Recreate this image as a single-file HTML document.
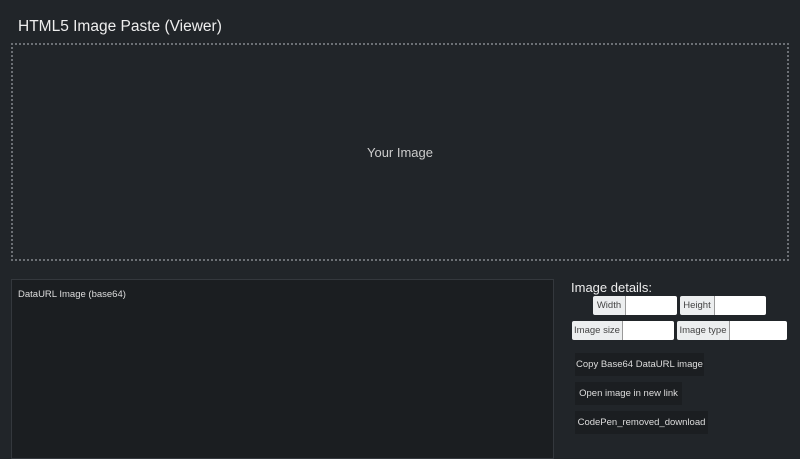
<!DOCTYPE html>
<html><head><style>
body{margin:0;width:800px;height:450px;background:#212529;font-family:"Liberation Sans",sans-serif;color:#e5e5e5;overflow:hidden;position:relative}
.t{position:absolute;left:18px;top:18px;font-size:15.5px;color:#eee}
.drop{position:absolute;left:11px;top:43px;width:774px;height:214px;border:2px dotted #6c7075;display:flex;align-items:center;justify-content:center;font-size:13px;color:#ccc}
.ta{position:absolute;left:11px;top:279px;width:543px;height:180px;background:#1b1e21;border:1px solid #34383d;font-size:9.5px;padding:9px 6px;box-sizing:border-box;color:#ddd}
.h{position:absolute;left:571px;top:280px;font-size:13px;color:#eee}
.f{position:absolute;height:19px;display:flex;font-size:9.5px}
.f span{background:#eceeef;color:#444;line-height:19px;border-radius:2px 0 0 2px;border-right:1px solid #999;text-align:center;box-sizing:border-box}
.f i{background:#fff;border-radius:0 2px 2px 0}
.b{position:absolute;left:575px;background:#1b1e21;color:#ddd;font-size:9.5px;height:23px;line-height:23px;text-align:center}
</style></head><body>
<div class="t">HTML5 Image Paste (Viewer)</div>
<div class="drop">Your Image</div>
<div class="ta">DataURL Image (base64)</div>
<div class="h">Image details:</div>
<div class="f" style="left:593px;top:296px"><span style="width:33px">Width</span><i style="width:51px"></i></div>
<div class="f" style="left:680px;top:296px"><span style="width:35px">Height</span><i style="width:51px"></i></div>
<div class="f" style="left:572px;top:321px"><span style="width:51px">Image size</span><i style="width:51px"></i></div>
<div class="f" style="left:677px;top:321px"><span style="width:53px">Image type</span><i style="width:57px"></i></div>
<div class="b" style="top:353px;width:129px">Copy Base64 DataURL image</div>
<div class="b" style="top:382px;width:107px">Open image in new link</div>
<div class="b" style="top:411px;width:133px">CodePen_removed_download</div>
</body></html>
